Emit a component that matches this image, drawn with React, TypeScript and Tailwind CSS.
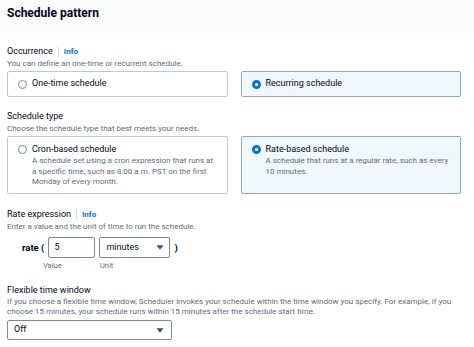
import React from "react";

function Radio({ on }: { on?: boolean }) {
  return on ? (
    <span className="box-border inline-block h-[9px] w-[9px] shrink-0 rounded-full border-[3px] border-[#0972d3] bg-white" />
  ) : (
    <span className="box-border inline-block h-[9px] w-[9px] shrink-0 rounded-full border border-[#7d8998] bg-white" />
  );
}

function Caret() {
  return (
    <svg width="8" height="5" viewBox="0 0 8 5">
      <path d="M0.5 0.3 L7.5 0.3 L4 4.7 Z" fill="#414d5c" />
    </svg>
  );
}

function Label({ text, info }: { text: string; info?: boolean }) {
  return (
    <div className="flex h-[13px] items-center text-[9px] leading-[13px] text-[#000716]">
      <span>{text}</span>
      {info && (
        <>
          <span className="mx-[5px] h-[10px] w-px bg-[#d1d5db]" />
          <span className="text-[8px] font-bold text-[#0972d3]">Info</span>
        </>
      )}
    </div>
  );
}

export default function App() {
  return (
    <div
      className="h-[347px] w-[474px] overflow-hidden bg-white"
      style={{ fontFamily: "Roboto, sans-serif" }}
    >
      <div className="h-[33px] bg-[#fafafa] px-[7px] pt-[6px]">
        <h2 className="text-[12px] font-bold leading-[14px] text-[#000716]">Schedule pattern</h2>
      </div>

      <div className="px-[7px] pt-[12px]">
        <Label text="Occurrence" info />
        <div className="text-[8px] leading-[11px] text-[#5f6b7a]">
          You can define an one-time or recurrent schedule.
        </div>
        <div className="mt-[2px] grid grid-cols-2 gap-[13px] pr-[6px]">
          <div className="flex h-[26px] items-center gap-[5px] rounded-[2px] border border-[#c2c8d0] px-[10px] text-[9px] text-[#000716]">
            <Radio />
            <span>One-time schedule</span>
          </div>
          <div className="flex h-[26px] items-center gap-[5px] rounded-[2px] border border-[#8ea7c6] bg-[#f1f7fd] px-[10px] text-[9px] text-[#000716]">
            <Radio on />
            <span>Recurring schedule</span>
          </div>
        </div>

        <div className="mt-[13px]">
          <Label text="Schedule type" />
        </div>
        <div className="text-[8px] leading-[11px] text-[#5f6b7a]">
          Choose the schedule type that best meets your needs.
        </div>
        <div className="mt-[2px] grid grid-cols-2 gap-[13px] pr-[6px]">
          <div className="flex h-[58px] items-start gap-[5px] rounded-[2px] border border-[#c2c8d0] pl-[10px] pr-[8px] pt-[6px]">
            <span className="mt-[1.5px] flex">
              <Radio />
            </span>
            <div>
              <div className="text-[9px] leading-[12px] text-[#000716]">Cron-based schedule</div>
              <div className="mt-[1px] text-[8px] leading-[10.5px] text-[#5f6b7a]">
                A schedule set using a cron expression that runs at a specific time, such as 8:00 a.m. PST on the first Monday of every month.
              </div>
            </div>
          </div>
          <div className="flex h-[58px] items-start gap-[5px] rounded-[2px] border border-[#8ea7c6] bg-[#f1f7fd] pl-[10px] pr-[8px] pt-[6px]">
            <span className="mt-[1.5px] flex">
              <Radio on />
            </span>
            <div>
              <div className="text-[9px] leading-[12px] text-[#000716]">Rate-based schedule</div>
              <div className="mt-[1px] text-[8px] leading-[10.5px] text-[#5f6b7a]">
                A schedule that runs at a regular rate, such as every 10 minutes.
              </div>
            </div>
          </div>
        </div>

        <div className="mt-[14px]">
          <Label text="Rate expression" info />
        </div>
        <div className="text-[8px] leading-[11px] text-[#5f6b7a]">
          Enter a value and the unit of time to run the schedule.
        </div>
        <div className="mt-[5px] flex items-center pl-[15px]">
          <div className="text-[9.5px] font-bold leading-[21px] text-[#000716]">rate (</div>
          <div className="ml-[4px] flex h-[21px] w-[47px] items-center rounded-[2px] border border-[#7d8998] px-[5px] text-[9px] text-[#000716]">
            5
          </div>
          <div className="ml-[4px] flex h-[21px] w-[71px] items-center justify-between rounded-[2px] border border-[#7d8998] pl-[6px] pr-[5px] text-[9px] text-[#000716]">
            <span>minutes</span>
            <Caret />
          </div>
          <div className="ml-[4px] text-[9.5px] font-bold leading-[21px] text-[#000716]">)</div>
        </div>
        <div className="mt-[2px] flex pl-[36px] text-[7.5px] leading-[11px] text-[#5f6b7a]">
          <span className="w-[57px]">Value</span>
          <span>Unit</span>
        </div>

        <div className="mt-[13px]">
          <Label text="Flexible time window" />
        </div>
        <div className="pr-[6px] text-[8px] leading-[10px] text-[#5f6b7a]">
          If you choose a flexible time window, Scheduler invokes your schedule within the time window you specify. For example, if you choose 15 minutes, your schedule runs within 15 minutes after the schedule start time.
        </div>
        <div className="mt-[3px] flex h-[20px] w-[165px] items-center justify-between rounded-[2px] border border-[#7d8998] pl-[6px] pr-[7px] text-[9px] text-[#000716]">
          <span>Off</span>
          <Caret />
        </div>
      </div>
    </div>
  );
}
